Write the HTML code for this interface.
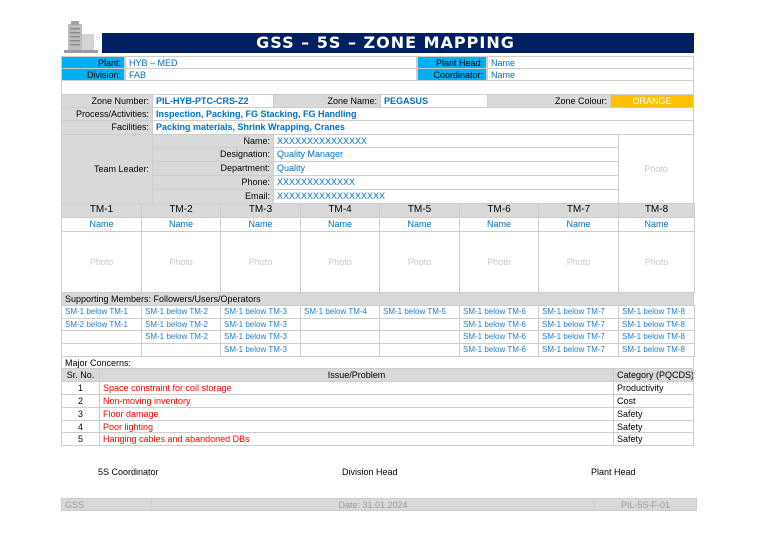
<!DOCTYPE html><html><head><style>
body{margin:0;width:768px;height:543px;background:#fff;position:relative;font-family:"Liberation Sans",sans-serif;font-size:9px;overflow:hidden}
div{position:absolute;box-sizing:border-box}
.c{border:1px solid #cdcdcd;line-height:12px;white-space:nowrap;overflow:hidden;padding:0 3px}
.g{background:#d9d9d9}.cy{background:#00b0f0}.r{text-align:right}.m{text-align:center}
.b{color:#0070c0}.bb{color:#0070c0;font-weight:bold}.red{color:#ff0000}.ph{color:#c8c8c8}
.sm{font-size:8px;color:#1f7fd0}
</style></head><body>
<svg style="position:absolute;left:62px;top:20px" width="38" height="34" viewBox="0 0 38 34"><rect x="6" y="4" width="14" height="28" fill="#bdbdbd"/><rect x="9" y="1" width="8" height="4" fill="#a0a0a0"/><rect x="20" y="14" width="12" height="18" fill="#d4d4d4"/><g fill="#8a8a8a"><rect x="8" y="8" width="10" height="1.5"/><rect x="8" y="12" width="10" height="1.5"/><rect x="8" y="16" width="10" height="1.5"/><rect x="8" y="20" width="10" height="1.5"/><rect x="8" y="24" width="10" height="1.5"/></g><rect x="2" y="30" width="34" height="3" fill="#9a9a9a"/></svg>
<div style="left:102px;top:33px;width:592px;height:20px;background:#002060;color:#fff;font-weight:bold;font-family:'DejaVu Sans',sans-serif;font-size:16px;letter-spacing:1px;text-align:center;line-height:20px;padding-right:25px">GSS – 5S – ZONE MAPPING</div>
<div class="c cy r" style="left:61px;top:56px;width:64px;height:13px">Plant:</div>
<div class="c b" style="left:125px;top:56px;width:292px;height:13px">HYB – MED</div>
<div class="c cy r" style="left:417px;top:56px;width:70px;height:13px">Plant Head:</div>
<div class="c b" style="left:487px;top:56px;width:207px;height:13px">Name</div>
<div class="c cy r" style="left:61px;top:68px;width:64px;height:13px">Division:</div>
<div class="c b" style="left:125px;top:68px;width:292px;height:13px">FAB</div>
<div class="c cy r" style="left:417px;top:68px;width:70px;height:13px">Coordinator:</div>
<div class="c b" style="left:487px;top:68px;width:207px;height:13px">Name</div>
<div class="c" style="left:61px;top:80px;width:633px;height:15px"></div>
<div class="c g r" style="left:61px;top:94px;width:92px;height:14px">Zone Number:</div>
<div class="c bb" style="left:152px;top:94px;width:122px;height:14px">PIL-HYB-PTC-CRS-Z2</div>
<div class="c g r" style="left:273px;top:94px;width:108px;height:14px">Zone Name:</div>
<div class="c bb" style="left:380px;top:94px;width:108px;height:14px">PEGASUS</div>
<div class="c g r" style="left:487px;top:94px;width:124px;height:14px">Zone Colour:</div>
<div class="c m" style="left:610px;top:94px;width:84px;height:14px;background:#ffc000;color:#fff">ORANGE</div>
<div class="c g r" style="left:61px;top:107px;width:92px;height:14px">Process/Activities:</div>
<div class="c bb" style="left:152px;top:107px;width:542px;height:14px">Inspection, Packing, FG Stacking, FG Handling</div>
<div class="c g r" style="left:61px;top:120px;width:92px;height:15px">Facilities:</div>
<div class="c bb" style="left:152px;top:120px;width:542px;height:15px">Packing materials, Shrink Wrapping, Cranes</div>
<div class="c g r" style="left:61px;top:134px;width:92px;height:70px;line-height:68px">Team Leader:</div>
<div class="c g r" style="left:152px;top:134px;width:122px;height:14px">Name:</div><div class="c b" style="left:273px;top:134px;width:346px;height:14px">XXXXXXXXXXXXXXX</div>
<div class="c g r" style="left:152px;top:147px;width:122px;height:15px">Designation:</div><div class="c b" style="left:273px;top:147px;width:346px;height:15px">Quality Manager</div>
<div class="c g r" style="left:152px;top:161px;width:122px;height:15px">Department:</div><div class="c b" style="left:273px;top:161px;width:346px;height:15px">Quality</div>
<div class="c g r" style="left:152px;top:175px;width:122px;height:15px">Phone:</div><div class="c b" style="left:273px;top:175px;width:346px;height:15px">XXXXXXXXXXXXX</div>
<div class="c g r" style="left:152px;top:189px;width:122px;height:15px">Email:</div><div class="c b" style="left:273px;top:189px;width:346px;height:15px">XXXXXXXXXXXXXXXXXX</div>
<div class="c m ph" style="left:618px;top:134px;width:76px;height:70px;line-height:68px">Photo</div>
<div id="tm"></div>
<div class="c g" style="left:61px;top:292px;width:633px;height:14px">Supporting Members: Followers/Users/Operators</div>
<div class="c" style="left:61px;top:356px;width:633px;height:13px">Major Concerns:</div>
<div class="c g m" style="left:61px;top:368px;width:39px;height:14px">Sr. No.</div>
<div class="c g m" style="left:99px;top:368px;width:515px;height:14px">Issue/Problem</div>
<div class="c g" style="left:613px;top:368px;width:81px;height:14px">Category (PQCDS)</div>
<div id="cc"></div>
<div style="left:98px;top:467px">5S Coordinator</div>
<div style="left:342px;top:467px">Division Head</div>
<div style="left:591px;top:467px">Plant Head</div>
<div class="c g ph" style="left:61px;top:498px;width:91px;height:13px;color:#999">GSS</div>
<div class="c g m" style="left:151px;top:498px;width:444px;height:13px;color:#999">Date: 31.01.2024</div>
<div class="c g m" style="left:594px;top:498px;width:103px;height:13px;color:#999">PIL-5S-F-01</div>
<script>
var x=[61,141,220,300,379,459,538,618,694],h='';
var ys=[305,318,330,343,356];
for(var i=0;i<8;i++){var l=x[i],w=x[i+1]-l+1;
h+='<div class="c g m" style="left:'+l+'px;top:203px;width:'+w+'px;height:15px;font-size:10px">TM-'+(i+1)+'</div>';
h+='<div class="c m b" style="left:'+l+'px;top:217px;width:'+w+'px;height:15px">Name</div>';
h+='<div class="c m ph" style="left:'+l+'px;top:231px;width:'+w+'px;height:62px;line-height:60px">Photo</div>';
for(var r=0;r<4;r++){var t='';
if(i==0){t=r==0?'SM-1 below TM-1':r==1?'SM-2 below TM-1':'';}
else if(i==1){t=r<3?'SM-1 below TM-2':'';}
else if(i==3||i==4){t=r==0?'SM-1 below TM-'+(i+1):'';}
else t='SM-1 below TM-'+(i+1);
h+='<div class="c sm" style="left:'+l+'px;top:'+ys[r]+'px;width:'+w+'px;height:'+(ys[r+1]-ys[r]+1)+'px">'+t+'</div>';}}
document.getElementById('tm').outerHTML=h;
var iss=['Space constraint for coil storage','Non-moving inventory','Floor damage','Poor lighting','Hanging cables and abandoned DBs'],cat=['Productivity','Cost','Safety','Safety','Safety'],yy=[381,394,407,420,432,445],g='';
for(var k=0;k<5;k++){var tp=yy[k],hh=yy[k+1]-tp+1;
g+='<div class="c m" style="left:61px;top:'+tp+'px;width:39px;height:'+hh+'px">'+(k+1)+'</div>';
g+='<div class="c red" style="left:99px;top:'+tp+'px;width:515px;height:'+hh+'px">'+iss[k]+'</div>';
g+='<div class="c" style="left:613px;top:'+tp+'px;width:81px;height:'+hh+'px">'+cat[k]+'</div>';}
document.getElementById('cc').outerHTML=g;
</script>
</body></html>
